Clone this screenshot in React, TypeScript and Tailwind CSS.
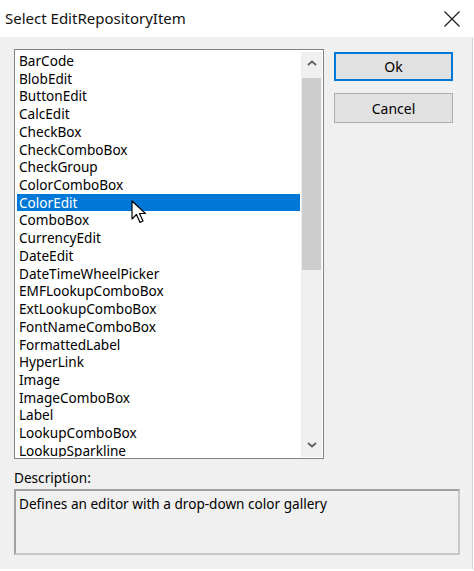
const items = [
  "BarCode",
  "BlobEdit",
  "ButtonEdit",
  "CalcEdit",
  "CheckBox",
  "CheckComboBox",
  "CheckGroup",
  "ColorComboBox",
  "ColorEdit",
  "ComboBox",
  "CurrencyEdit",
  "DateEdit",
  "DateTimeWheelPicker",
  "EMFLookupComboBox",
  "ExtLookupComboBox",
  "FontNameComboBox",
  "FormattedLabel",
  "HyperLink",
  "Image",
  "ImageComboBox",
  "Label",
  "LookupComboBox",
  "LookupSparkline",
];

function Cursor() {
  return (
    <svg
      className="absolute left-[114px] top-[6px]"
      width="17"
      height="26"
      viewBox="0 0 17 26"
    >
      <path
        d="M1 1 L1 19 L5.5 14.5 L9 22.5 L12 21 L8.5 13.5 L14.5 13.5 Z"
        fill="#fff"
        stroke="#000"
        strokeWidth="1.2"
        strokeLinejoin="round"
      />
    </svg>
  );
}

function ScrollBar() {
  return (
    <div className="w-[21px] h-full bg-[#f0f0f0] flex flex-col">
      <div className="h-[21px] flex items-center justify-center">
        <svg width="10" height="6" viewBox="0 0 10 6">
          <polyline points="1,5 5,1.5 9,5" fill="none" stroke="#606060" strokeWidth="1.8" />
        </svg>
      </div>
      <div className="mt-[5px] mx-[1px] h-[192px] bg-[#cdcdcd]" />
      <div className="flex-1" />
      <div className="h-[24px] flex items-center justify-center">
        <svg width="10" height="6" viewBox="0 0 10 6">
          <polyline points="1,1 5,4.5 9,1" fill="none" stroke="#606060" strokeWidth="1.8" />
        </svg>
      </div>
    </div>
  );
}

export default function App() {
  return (
    <div
      className="w-[474px] h-[571px] bg-white flex flex-col text-black"
      style={{ fontFamily: '"Noto Sans", "Open Sans", sans-serif' }}
    >
      <div className="h-[37px] flex items-center justify-between pl-[5px] pr-[13px]">
        <span className="text-[15px] text-[#111]">Select EditRepositoryItem</span>
        <svg width="18" height="18" viewBox="0 0 18 18">
          <path d="M1.5 1.5 L16.5 16.5 M16.5 1.5 L1.5 16.5" stroke="#222" strokeWidth="1.3" />
        </svg>
      </div>
      <div className="h-[532px] w-[473px] bg-[#f0f0f0] border-r border-[#d4d4d4] flex flex-col pl-[14px] pt-[12px]">
        <div className="flex gap-[10px]">
          <div className="w-[310px] h-[410px] bg-white border border-[#828282] flex pl-[2px] pt-[2px] pb-[1px] pr-[1px]">
            <div className="flex-1 flex flex-col overflow-hidden text-[13.6px] leading-[17.73px] pr-[1px]">
              {items.map((item) => (
                <div
                  key={item}
                  className={`relative shrink-0 h-[17.73px] pl-[2px] whitespace-nowrap ${
                    item === "ColorEdit" ? "bg-[#0078d7] text-white" : ""
                  }`}
                >
                  {item}
                  {item === "ColorEdit" && <Cursor />}
                </div>
              ))}
            </div>
            <ScrollBar />
          </div>
          <div className="flex flex-col gap-[12px] pt-[3px]">
            <button className="w-[119px] h-[29px] bg-[#e1e1e1] border-2 border-[#0078d7] text-[14px]">
              Ok
            </button>
            <button className="w-[119px] h-[30px] bg-[#e1e1e1] border border-[#adadad] text-[14px]">
              Cancel
            </button>
          </div>
        </div>
        <div className="mt-[9px] text-[13.6px] leading-[20px]">Description:</div>
        <div className="mt-[1px] w-[446px] h-[66px] border-2 border-t-[#a0a0a0] border-l-[#a0a0a0] border-b-[#c8c8c8] border-r-[#c8c8c8] px-[3px] pt-[4px] text-[13.6px] leading-[18px]">
          Defines an editor with a drop-down color gallery
        </div>
      </div>
      <div className="flex-1 bg-white" />
    </div>
  );
}
